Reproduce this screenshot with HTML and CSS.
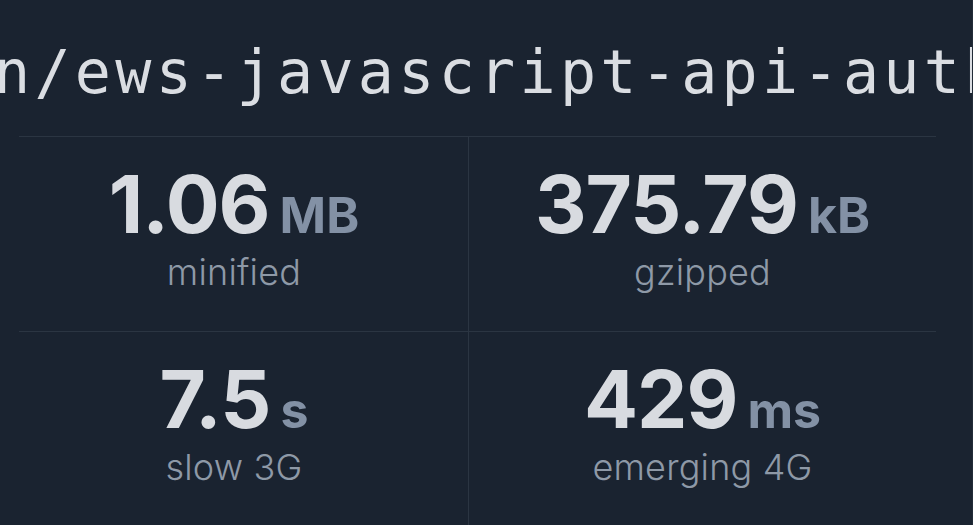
FILE: index.html
```html
<!DOCTYPE html>
<html lang="en">
<head>
<meta charset="utf-8">
<title>ews-javascript-api-auth</title>
<link rel="stylesheet" href="styles.css">
</head>
<body>
<div class="page">
  <h1 class="title"><span class="title-text">n/ews-javascript-api-auth</span></h1>
  <div class="stats">
    <div class="row">
      <div class="cell">
        <div class="value"><span class="num">1.06</span><span class="unit">MB</span></div>
        <div class="label">minified</div>
      </div>
      <div class="cell">
        <div class="value"><span class="num">375.79</span><span class="unit">kB</span></div>
        <div class="label">gzipped</div>
      </div>
    </div>
    <div class="row">
      <div class="cell">
        <div class="value"><span class="num">7.5</span><span class="unit">s</span></div>
        <div class="label">slow 3G</div>
      </div>
      <div class="cell">
        <div class="value"><span class="num">429</span><span class="unit">ms</span></div>
        <div class="label">emerging 4G</div>
      </div>
    </div>
  </div>
</div>
</body>
</html>
```
FILE: styles.css
```css
html, body {
  margin: 0;
  padding: 0;
  background: #1a2330;
  height: 100%;
  overflow: hidden;
}

.page {
  width: 972px;
  height: 100%;
  border-right: 1px solid #222c38;
}

.title {
  margin: 0;
  height: 136px;
  box-sizing: border-box;
  padding-top: 42px;
  font-family: "DejaVu Sans Mono", monospace;
  font-weight: normal;
  font-size: 60px;
  line-height: 60px;
  letter-spacing: 4.3px;
  color: #dadde2;
  white-space: nowrap;
  overflow: hidden;
}

.title-text {
  display: inline-block;
  margin-left: -6px;
}

.stats {
  margin-left: 19px;
  width: 917px;
}

.row {
  display: grid;
  grid-template-columns: 450px 467px;
  height: 195px;
  box-sizing: border-box;
  border-top: 1px solid #2b3542;
}

.cell {
  display: flex;
  flex-direction: column;
  align-items: center;
  padding-top: 27px;
}

.cell:first-child {
  margin-left: -19px;
  border-right: 1px solid #2b3542;
}

.value {
  display: flex;
  align-items: baseline;
  font-family: Inter, "Noto Sans", sans-serif;
  font-weight: 700;
  line-height: 80px;
}

.num {
  font-size: 80px;
  color: #d8dbe0;
  letter-spacing: -1px;
}

.unit {
  font-size: 50px;
  color: #8391a5;
  margin-left: 10px;
}

.label {
  margin-top: -1px;
  font-family: Inter, "Noto Sans", sans-serif;
  font-weight: 300;
  font-size: 36px;
  line-height: 36px;
  letter-spacing: 0.2px;
  color: #8e99a7;
}
```
